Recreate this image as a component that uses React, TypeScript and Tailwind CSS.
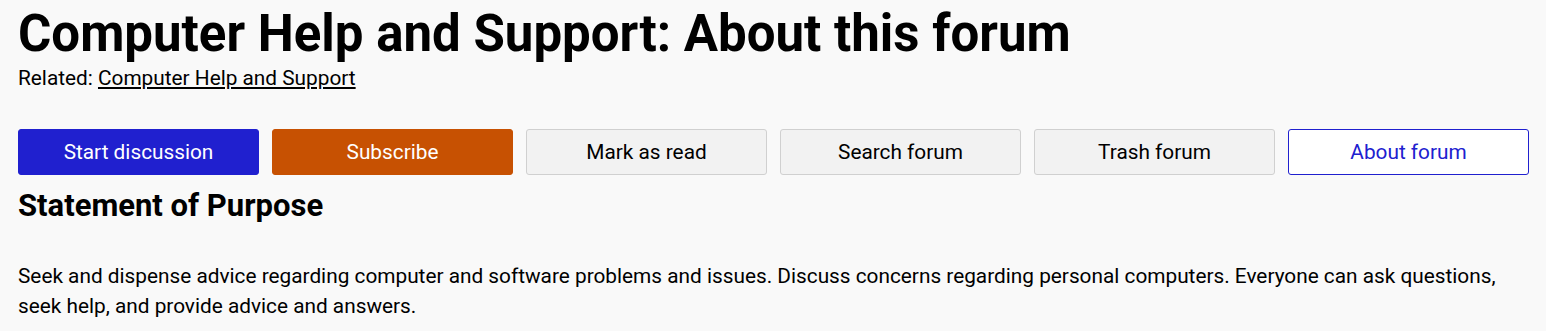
import React from "react";

const actions = [
  { label: "Start discussion", kind: "primary" },
  { label: "Subscribe", kind: "warn" },
  { label: "Mark as read", kind: "plain" },
  { label: "Search forum", kind: "plain" },
  { label: "Trash forum", kind: "plain" },
  { label: "About forum", kind: "active" },
];

const styles: Record<string, string> = {
  primary: "bg-[#2020cf] border-[#2020cf] text-white",
  warn: "bg-[#c75102] border-[#c75102] text-white",
  plain: "bg-[#f2f2f2] border-[#d0d0d0] text-black",
  active: "bg-white border-[#2020cf] text-[#2020cf]",
};

export default function App() {
  return (
    <div className="min-h-[331px] bg-[#f9f9f9] pl-[18px] pr-[17px] pt-[4px] font-['Roboto',sans-serif] text-black">
      <h1 className="text-[51px] font-bold leading-[60px]">Computer Help and Support: About this forum</h1>
      <p className="text-[20.8px] leading-[28px]">
        Related:{" "}
        <a href="#" className="underline">
          Computer Help and Support
        </a>
      </p>
      <div className="mt-[37px] grid grid-cols-6 gap-[13px]">
        {actions.map((a) => (
          <button
            key={a.label}
            className={`h-[46px] rounded-[3px] border pt-[2px] text-[20.8px] ${styles[a.kind]}`}
          >
            {a.label}
          </button>
        ))}
      </div>
      <h2 className="mt-[13px] text-[31px] font-bold leading-[36px]">Statement of Purpose</h2>
      <p className="mt-[37px] text-[20.8px] leading-[30px]">
        Seek and dispense advice regarding computer and software problems and issues. Discuss concerns regarding
        personal computers. Everyone can ask questions, seek help, and provide advice and answers.
      </p>
    </div>
  );
}
